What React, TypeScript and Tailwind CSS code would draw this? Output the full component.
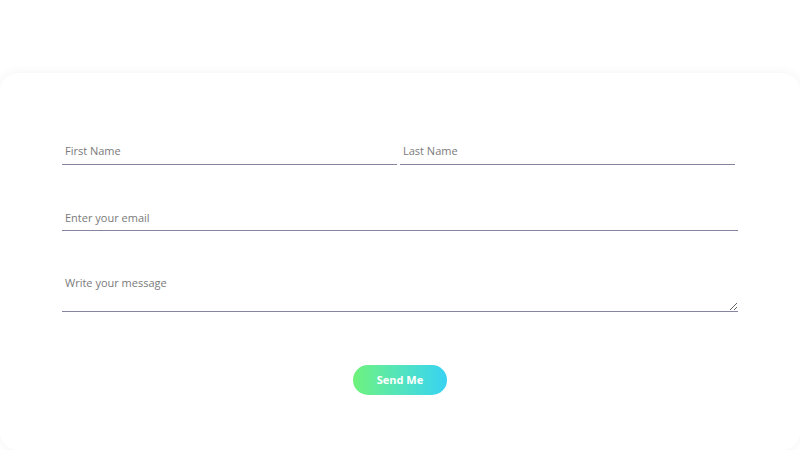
export default function App() {
  return (
    <div className="h-screen bg-white overflow-hidden font-['Open_Sans',sans-serif]">
      <div className="mt-[73px] h-[377px] rounded-[18px] bg-white shadow-[0_0_12px_rgba(0,0,0,0.05)] px-[62px] pt-[67px]">
        <form className="flex flex-col" onSubmit={(e) => e.preventDefault()}>
          <div className="flex gap-[3px]">
            <input
              type="text"
              placeholder="First Name"
              className="w-[335px] h-[25px] px-[3px] pb-[3px] text-[11px] text-gray-700 placeholder:text-[#7a7a7a] border-b border-[#85859f] outline-none"
            />
            <input
              type="text"
              placeholder="Last Name"
              className="w-[335px] h-[25px] px-[3px] pb-[3px] text-[11px] text-gray-700 placeholder:text-[#7a7a7a] border-b border-[#85859f] outline-none"
            />
          </div>
          <input
            type="email"
            placeholder="Enter your email"
            className="mt-[41px] w-[676px] h-[25px] px-[3px] pb-[2px] text-[11px] text-gray-700 placeholder:text-[#7a7a7a] border-b border-[#85859f] outline-none"
          />
          <textarea
            placeholder="Write your message"
            className="mt-[41px] w-[676px] h-[40px] px-[3px] pt-[3px] text-[11px] text-gray-700 placeholder:text-[#7a7a7a] border-b border-[#85859f] outline-none"
          />
          <div className="flex justify-center mt-[53px]">
            <button
              type="submit"
              className="w-[94px] h-[30px] rounded-full bg-gradient-to-r from-[#6ff279] to-[#38d2f2] text-white text-[11px] font-bold pt-[1px]"
            >
              Send Me
            </button>
          </div>
        </form>
      </div>
    </div>
  );
}
